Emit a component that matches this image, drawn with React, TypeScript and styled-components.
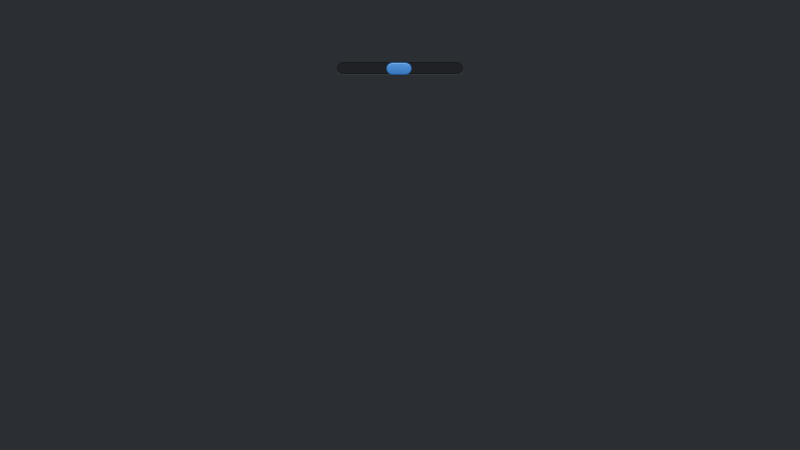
import React from 'react';
import styled, { createGlobalStyle } from 'styled-components';

const GlobalStyle = createGlobalStyle`
  html, body {
    margin: 0;
    padding: 0;
    background: #2b2e32;
    font-family: "Liberation Sans", Arial, sans-serif;
  }
`;

const Page = styled.div`
  width: 800px;
  height: 450px;
  display: flex;
  justify-content: center;
  padding-top: 62px;
  box-sizing: border-box;
`;

const Track = styled.div`
  position: relative;
  width: 126px;
  height: 12px;
  box-sizing: border-box;
  border-radius: 6px;
  background: #1f2124;
  border: 1px solid #191b1d;
  box-shadow: 0 1px 0 rgba(255, 255, 255, 0.05);
`;

const Thumb = styled.div`
  position: absolute;
  top: -1px;
  width: 26px;
  height: 13px;
  box-sizing: border-box;
  border-radius: 7px;
  background: linear-gradient(#5597dc, #3875bb);
  border: 1px solid #22538a;
  box-shadow: inset 0 1px 0 rgba(255, 255, 255, 0.2);
`;

export default function App() {
  const value = 0.5;
  return (
    <>
      <GlobalStyle />
      <Page>
        <Track>
          <Thumb style={{ left: `calc(${value * 100}% - 14px)` }} />
        </Track>
      </Page>
    </>
  );
}
